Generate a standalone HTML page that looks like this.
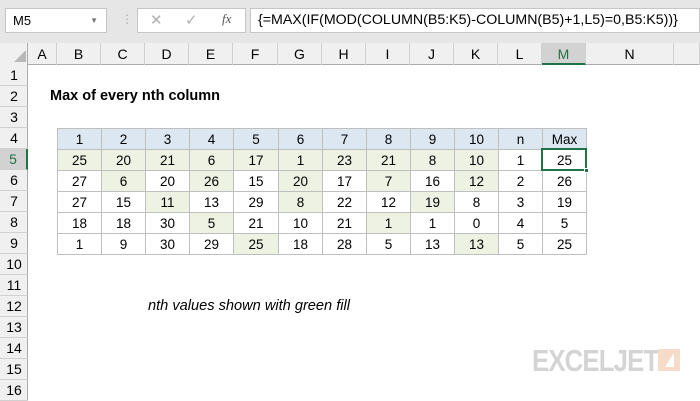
<!DOCTYPE html><html><head><style>
body{margin:0;width:700px;height:400px;overflow:hidden;background:#fff;font-family:"Liberation Sans",sans-serif;position:relative}
.a{position:absolute;box-sizing:border-box}
.c{position:absolute;box-sizing:border-box;text-align:center;font-size:13.5px;line-height:21px;height:21px}
</style></head><body>
<div class="a" style="left:0;top:0;width:700px;height:43px;background:#e6e6e6"></div>
<div class="a" style="left:5px;top:8px;width:102px;height:25px;background:#fff;border:1px solid #c6c6c6;font-size:13px;line-height:23px;padding-left:7px">M5<span style="position:absolute;right:8px;top:0;font-size:8px;color:#777">▼</span></div>
<div class="a" style="left:121px;top:12px;color:#aaa;font-size:12px">⋮</div>
<div class="a" style="left:137px;top:8px;width:109px;height:25px;background:#fff;border:1px solid #c6c6c6"></div>
<div class="a" style="left:150px;top:11px;color:#b0b0b0;font-size:15px">✕</div>
<div class="a" style="left:185px;top:11px;color:#b0b0b0;font-size:15px">✓</div>
<div class="a" style="left:222px;top:11px;color:#555;font-size:13px;font-style:italic;font-family:'Liberation Serif',serif">fx</div>
<div class="a" style="left:250px;top:8px;width:450px;height:25px;background:#fff;border:1px solid #c6c6c6;font-size:14.2px;line-height:23px;padding-left:7px;white-space:nowrap">{=MAX(IF(MOD(COLUMN(B5:K5)-COLUMN(B5)+1,L5)=0,B5:K5))}</div>
<div class="a" style="left:0;top:43px;width:700px;height:22px;background:#f0f0f0;border-bottom:1px solid #ababab"></div>
<div class="a" style="left:0;top:43px;width:28px;height:357px;background:#f0f0f0;border-right:1px solid #ababab"></div>
<svg class="a" style="left:12px;top:50px" width="14" height="12"><polygon points="14,0 14,12 2,12" fill="#b8b8b8"/></svg>
<div id="g"></div>
<div class="a" style="left:50px;top:86px;font-size:14.5px;font-weight:bold;line-height:21px">Max of every nth column</div>
<div class="a" style="left:148px;top:296px;font-size:14.6px;font-style:italic;line-height:21px">nth values shown with green fill</div>
<div class="a" style="left:532px;top:343px;font-size:31px;font-weight:bold;color:#d4d4d4;letter-spacing:-1px;transform:scaleX(.83);transform-origin:left">EXCELJET</div>
<div class="a" style="left:658px;top:349px;width:22px;height:22px;background:#f6dcc8"></div>
<svg class="a" style="left:658px;top:349px" width="22" height="22"><polygon points="16,4 16,18 7,18" fill="#fff"/></svg>
<script>
var cols=[["A",28,57],["B",57,101],["C",101,145],["D",145,189],["E",189,233],["F",233,278],["G",278,322],["H",322,366],["I",366,410],["J",410,454],["K",454,498],["L",498,542],["M",542,586],["N",586,674],["",674,700]];
var h="";
cols.forEach(function(c){var sel=c[0]=="M";h+='<div class="c" style="left:'+c[1]+'px;top:43px;width:'+(c[2]-c[1])+'px;height:22px;line-height:22px;font-size:14px;border-right:1px solid #d0d0d0;'+(sel?'background:#d2d2d2;color:#217346;border-bottom:2px solid #217346':'')+'">'+c[0]+'</div>';});
for(var r=1;r<=16;r++){var y=65+(r-1)*21;var sel=r==5;h+='<div class="c" style="left:0;top:'+y+'px;width:28px;font-size:14px;border-bottom:1px solid #d0d0d0;'+(sel?'background:#d2d2d2;color:#217346;border-right:2px solid #217346':'')+'">'+r+'</div>';}
var data=[["1","2","3","4","5","6","7","8","9","10","n","Max"],[25,20,21,6,17,1,23,21,8,10,1,25],[27,6,20,26,15,20,17,7,16,12,2,26],[27,15,11,13,29,8,22,12,19,8,3,19],[18,18,30,5,21,10,21,1,1,0,4,5],[1,9,30,29,25,18,28,5,13,13,5,25]];
for(var i=0;i<6;i++){var y=128+i*21;for(var j=0;j<12;j++){var c=cols[j+1];var bg="#fff";if(i==0)bg="#dde7f1";else if(j<10&&(j+1)%i==0)bg="#edf2e2";
h+='<div class="c" style="left:'+c[1]+'px;top:'+y+'px;width:'+(c[2]-c[1]+1)+'px;height:22px;background:'+bg+';border:1px solid #bfbfbf">'+data[i][j]+'</div>';}}
h+='<div class="a" style="left:541px;top:148px;width:46px;height:23px;border:2px solid #217346"></div><div class="a" style="left:584px;top:168px;width:5px;height:5px;background:#217346;border:1px solid #fff"></div>';
document.getElementById("g").innerHTML=h;
</script>
</body></html>
